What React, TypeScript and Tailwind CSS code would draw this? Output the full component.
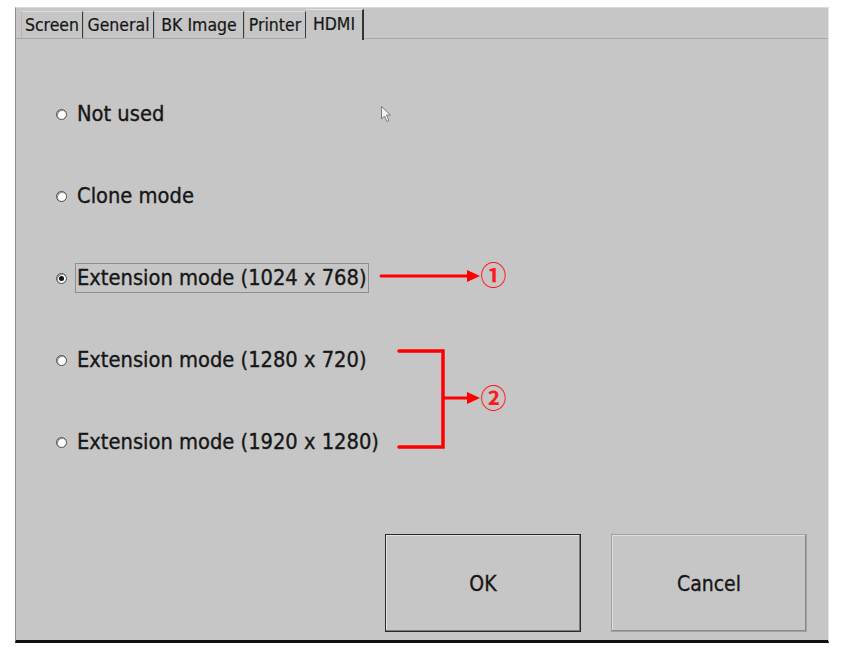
import React from "react";

const tabs = [
  { label: "Screen", w: "w-[62px]" },
  { label: "General", w: "w-[71px]" },
  { label: "BK Image", w: "w-[90px]" },
  { label: "Printer", w: "w-[62px]" },
];

const options = [
  { label: "Not used", selected: false },
  { label: "Clone mode", selected: false },
  { label: "Extension mode (1024 x 768)", selected: true },
  { label: "Extension mode (1280 x 720)", selected: false },
  { label: "Extension mode (1920 x 1280)", selected: false },
];

export default function App() {
  return (
    <div className="relative w-[846px] h-[647px] bg-white pl-[15px] pt-[7px] overflow-hidden font-['DejaVu_Sans_Condensed','DejaVu_Sans',sans-serif] text-[#161616]">
      <div className="flex flex-col w-[814px] h-[636px] bg-[#c6c6c6] border-l border-l-[#8a8a8a] border-t border-t-[#dcdcdc] border-r border-r-[#e2e2e2] border-b-[3px] border-b-[#111]">
        {/* Tabs */}
        <div className="flex items-end h-[31px] pl-[5px] border-b border-b-[#a8a8a8]">
          {tabs.map((t) => (
            <div
              key={t.label}
              className={`${t.w} h-[27px] border-t border-t-[#dadada] border-l border-l-[#b4b4b4] border-r border-r-[#3a3a3a] text-[17.5px] leading-[26px] text-center whitespace-nowrap [-webkit-text-stroke:0.2px_#161616]`}
            >
              {t.label}
            </div>
          ))}
          <div className="relative z-10 w-[58px] h-[31px] -mb-[2px] bg-[#c6c6c6] border-t border-t-[#e4e4e4] border-r-2 border-r-[#333] text-[17.5px] leading-[28px] text-center whitespace-nowrap [-webkit-text-stroke:0.2px_#161616]">
            HDMI
          </div>
        </div>

        {/* Options */}
        <div className="flex flex-col gap-[52px] pt-[60px]">
          {options.map((o) => (
            <div key={o.label} className="flex items-center h-[30px] pl-[40px]">
              <div className="flex items-center justify-center w-[11px] h-[11px] rounded-full bg-white border border-[#4a4a4a] shadow-[inset_1px_1px_0_#9a9a9a]">
                {o.selected && <div className="w-[5px] h-[5px] rounded-full bg-[#111]" />}
              </div>
              <div
                className={`ml-[8px] h-[30px] px-[1px] border text-[21.7px] leading-[28px] whitespace-nowrap [-webkit-text-stroke:0.35px_#161616] ${
                  o.selected ? "border-[#8e8e8e]" : "border-transparent"
                }`}
              >
                {o.label}
              </div>
            </div>
          ))}
        </div>

        {/* Buttons */}
        <div className="mt-auto flex justify-end gap-[30px] pr-[21px] pb-[8px]">
          <button className="w-[196px] h-[98px] pt-[4px] bg-[#c6c6c6] border border-[#2a2a2a] shadow-[inset_-1px_-1px_0_#7a7a7a,inset_1px_1px_0_#e4e4e4] text-[21px] [-webkit-text-stroke:0.3px_#161616]">
            OK
          </button>
          <button className="w-[196px] h-[98px] pt-[4px] bg-[#c6c6c6] border border-[#a0a0a0] shadow-[inset_-1px_-1px_0_#8a8a8a,inset_1px_1px_0_#dedede] text-[21px] [-webkit-text-stroke:0.3px_#161616]">
            Cancel
          </button>
        </div>
      </div>

      {/* Annotations */}
      <svg className="absolute left-0 top-0 pointer-events-none" width="846" height="647" viewBox="0 0 846 647">
        <line x1="381" y1="276" x2="470" y2="276" stroke="#ff0000" strokeWidth="3" strokeLinecap="round" />
        <polygon points="467,270 480,276 467,282" fill="#ff0000" />
        <polyline points="399,351 443,351 443,447 399,447" fill="none" stroke="#ff0000" strokeWidth="3.5" strokeLinecap="round" strokeLinejoin="miter" />
        <line x1="443" y1="398" x2="470" y2="398" stroke="#ff0000" strokeWidth="3" />
        <polygon points="467,392 480,398 467,404" fill="#ff0000" />
        <path d="M381.5 106.5 L381.5 119 L384.5 116 L387 121.5 L389 120.5 L386.5 115 L390.5 115 Z" fill="#f4f4f4" stroke="#7a7a7a" strokeWidth="1" />
      </svg>
      <span className="absolute left-[480px] top-[259px] w-[27px] h-[30px] flex items-center justify-center text-[26px] font-bold leading-none text-[#ff1a1a] font-['Noto_Sans_CJK_JP',sans-serif]">
        ①
      </span>
      <span className="absolute left-[480px] top-[382px] w-[27px] h-[30px] flex items-center justify-center text-[26px] font-bold leading-none text-[#ff1a1a] font-['Noto_Sans_CJK_JP',sans-serif]">
        ②
      </span>
    </div>
  );
}
